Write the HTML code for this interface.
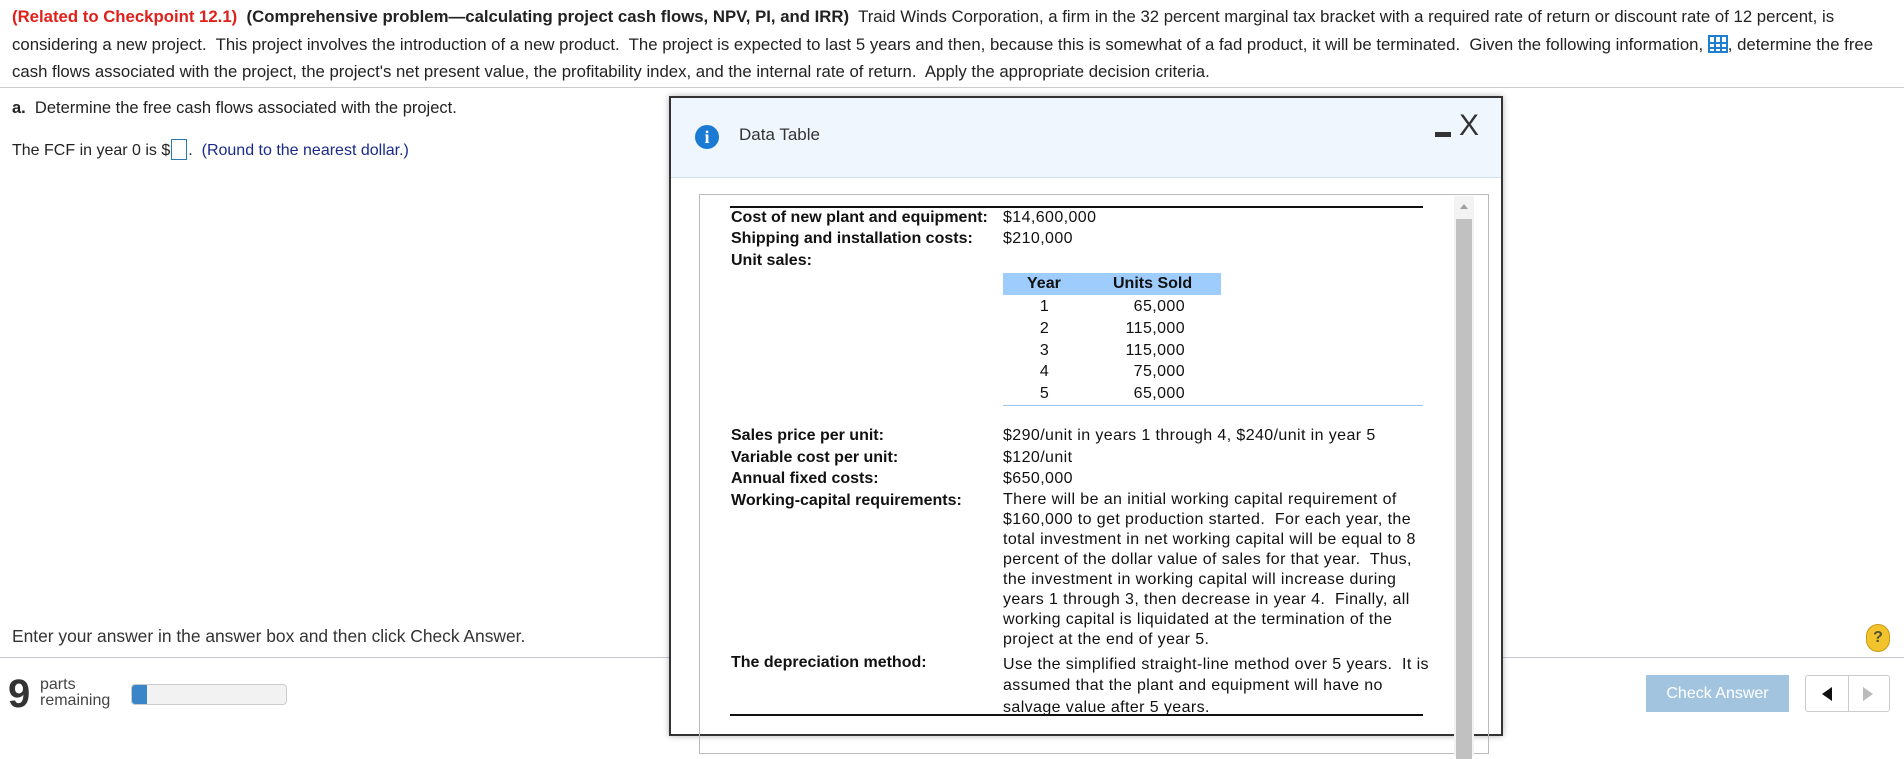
<!DOCTYPE html>
<html><head><meta charset="utf-8"><style>
*{margin:0;padding:0;box-sizing:border-box}
body{width:1904px;height:716px;overflow:hidden;background:#fff;font-family:"Liberation Sans",Arial,sans-serif;color:#222;position:relative;font-size:16px}
.a{position:absolute;white-space:nowrap}
.top{position:absolute;left:12px;top:3px;width:1884px;line-height:27.5px;font-size:16.75px}
.red{color:#e0201a;font-weight:bold}
.hr{position:absolute;height:1px;background:#ccc}
.lb{font-weight:bold;font-size:16px;color:#111}
.v{font-size:16px;color:#111;letter-spacing:0.4px}
</style></head><body>
<div class="top"><span class="red">(Related to Checkpoint 12.1)</span>&nbsp; <b>(Comprehensive problem—calculating project cash flows, NPV, PI, and IRR)</b>&nbsp; Traid Winds Corporation, a firm in the 32 percent marginal tax bracket with a required rate of return or discount rate of 12 percent, is considering a new project.&nbsp; This project involves the introduction of a new product.&nbsp; The project is expected to last 5 years and then, because this is somewhat of a fad product, it will be terminated.&nbsp; Given the following information, <span style="display:inline-block;width:20px;height:18px;border:2px solid #1f7fcf;vertical-align:-3px;background:linear-gradient(#1f7fcf,#1f7fcf) 0 5px/100% 2px no-repeat,linear-gradient(#1f7fcf,#1f7fcf) 0 10px/100% 2px no-repeat,linear-gradient(90deg,#1f7fcf,#1f7fcf) 4px 0/2px 100% no-repeat,linear-gradient(90deg,#1f7fcf,#1f7fcf) 10px 0/2px 100% no-repeat"></span>, determine the free cash flows associated with the project, the project's net present value, the profitability index, and the internal rate of return.&nbsp; Apply the appropriate decision criteria.</div>
<div class="hr" style="left:0;top:87px;width:1904px"></div>
<div class="a" style="left:12px;top:99px;font-size:16.5px"><b>a.</b>&nbsp; Determine the free cash flows associated with the project.</div>
<div class="a" style="left:12px;top:139px;font-size:16px">The FCF in year 0 is $<span style="display:inline-block;width:16px;height:21px;border:1px solid #2a7ab0;vertical-align:-5px;margin:0 1px"></span>.&nbsp; <span style="color:#1a2a8a">(Round to the nearest dollar.)</span></div>
<div class="a" style="left:12px;top:626px;color:#333;font-size:17.4px">Enter your answer in the answer box and then click Check Answer.</div>
<div class="hr" style="left:0;top:657px;width:1904px;background:#c8c8d8"></div>
<div class="a" style="left:8px;top:672px;font-size:40px;font-weight:bold;color:#333;line-height:44px">9</div>
<div class="a" style="left:40px;top:677px;font-size:16px;line-height:16px;color:#444">parts<br>remaining</div>
<div class="a" style="left:131px;top:684px;width:156px;height:21px;border:1px solid #ccc;border-radius:4px;background:#f2f2f2;overflow:hidden"><div style="width:15px;height:100%;background:#3a85c8"></div></div>
<div class="a" style="left:1866px;top:624px;width:24px;height:28px;border-radius:12px;background:#f3c32d;border:1px solid #c99a10;text-align:center;font-weight:bold;color:#553;line-height:26px">?</div>
<div class="a" style="left:1646px;top:675px;width:143px;height:37px;background:#a3c4df;color:#fff;text-align:center;line-height:37px;font-size:16px">Check Answer</div>
<div class="a" style="left:1805px;top:675px;width:85px;height:37px;border:1px solid #ccc;border-radius:3px;background:#fff"><div style="position:absolute;left:42px;top:0;width:1px;height:35px;background:#ccc"></div><div style="position:absolute;left:16px;top:11px;border-right:10px solid #111;border-top:7px solid transparent;border-bottom:7px solid transparent"></div><div style="position:absolute;left:57px;top:11px;border-left:10px solid #bbb;border-top:7px solid transparent;border-bottom:7px solid transparent"></div></div>

<div class="a" style="left:669px;top:96px;width:834px;height:640px;border:2px solid #333;background:#fff;box-shadow:0 0 6px rgba(0,0,0,.3)">
 <div style="position:absolute;left:0;top:0;width:100%;height:80px;background:#f0f6fe;border-bottom:1px solid #cfe0f5"></div>
 <div style="position:absolute;left:24px;top:27px;width:24px;height:24px;border-radius:50%;background:#1a7ad4;color:#fff;font-weight:bold;font-family:'Liberation Serif',serif;text-align:center;line-height:24px;font-size:18px">i</div>
 <div style="position:absolute;left:68px;top:27px;font-size:17px;color:#333">Data Table</div>
 <div style="position:absolute;left:764px;top:34px;width:16px;height:5px;background:#333"></div>
 <div style="position:absolute;left:788px;top:12px;font-size:30px;color:#333;line-height:32px">X</div>
 <div style="position:absolute;left:28px;top:96px;width:790px;height:560px;border:1px solid #bbb"></div>
 <div style="position:absolute;left:783px;top:98px;width:20px;height:560px;background:#f3f3f3"><div style="position:absolute;left:2px;top:23px;width:16px;height:540px;background:#c1c1c1"></div><div style="position:absolute;left:6px;top:8px;border-bottom:5px solid #a0a0a0;border-left:4px solid transparent;border-right:4px solid transparent"></div></div>
</div>
<div class="hr" style="left:730px;top:206px;width:693px;background:#111;height:2px"></div>
<div class="a lb" style="left:731px;top:209px">Cost of new plant and equipment:</div><div class="a v" style="left:1003px;top:209px">$14,600,000</div>
<div class="a lb" style="left:731px;top:230px">Shipping and installation costs:</div><div class="a v" style="left:1003px;top:230px">$210,000</div>
<div class="a lb" style="left:731px;top:252px">Unit sales:</div>
<div class="a" style="left:1003px;top:273px;width:218px;height:22px;background:#9dccfd"></div>
<div class="a lb" style="left:1027px;top:275px">Year</div><div class="a lb" style="left:1113px;top:275px">Units Sold</div>
<div class="a v" style="left:1003px;top:296px;width:83px;text-align:center;line-height:21.8px">1<br>2<br>3<br>4<br>5</div>
<div class="a v" style="left:1100px;top:296px;width:85px;text-align:right;line-height:21.8px">65,000<br>115,000<br>115,000<br>75,000<br>65,000</div>
<div class="hr" style="left:1003px;top:405px;width:420px;background:#9dc4ec"></div>
<div class="a lb" style="left:731px;top:425px;line-height:21.5px">Sales price per unit:<br>Variable cost per unit:<br>Annual fixed costs:<br>Working-capital requirements:</div>
<div class="a v" style="left:1003px;top:425px;line-height:21.5px">$290/unit in years 1 through 4, $240/unit in year 5<br>$120/unit<br>$650,000</div>
<div class="a v" style="left:1003px;top:490px;line-height:20px">There will be an initial working capital requirement of<br>$160,000 to get production started.&nbsp; For each year, the<br>total investment in net working capital will be equal to 8<br>percent of the dollar value of sales for that year.&nbsp; Thus,<br>the investment in working capital will increase during<br>years 1 through 3, then decrease in year 4.&nbsp; Finally, all<br>working capital is liquidated at the termination of the<br>project at the end of year 5.</div>
<div class="a lb" style="left:731px;top:654px">The depreciation method:</div>
<div class="a v" style="left:1003px;top:654px;line-height:21.3px">Use the simplified straight-line method over 5 years.&nbsp; It is<br>assumed that the plant and equipment will have no<br>salvage value after 5 years.</div>
<div class="hr" style="left:730px;top:714px;width:693px;background:#111;height:2px"></div>
</body></html>
